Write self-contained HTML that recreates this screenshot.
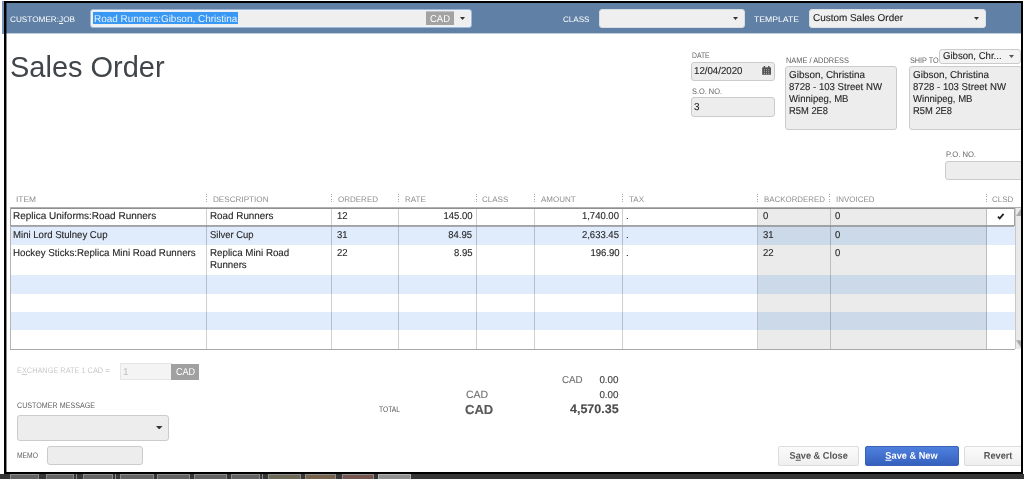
<!DOCTYPE html>
<html>
<head>
<meta charset="utf-8">
<title>Sales Order</title>
<style>
*{box-sizing:border-box;margin:0;padding:0}
html,body{width:1024px;height:479px;overflow:hidden;background:#fff}
body{font-family:"Liberation Sans",sans-serif;font-size:10px;color:#1a1a1a;position:relative;will-change:transform}
.abs{position:absolute}
#win{position:absolute;left:4px;top:1px;width:1019.5px;height:473px;border:2.5px solid #000;border-top-width:2px;background:#fff}
#taskbar{position:absolute;left:0;top:474px;width:1024px;height:5px;background:#363636}
#hdr{position:absolute;left:6px;top:3px;width:1015px;height:30px;background:#6080a6}
.lbl,.hl,.th{position:absolute;white-space:nowrap;transform-origin:0 0}
.fld{position:absolute;border:1px solid #c9c9c9}
.txt{position:absolute;white-space:nowrap;font-size:10px;line-height:12px;transform-origin:0 0;-webkit-text-stroke:0.12px}
.dots{position:absolute;width:1px;height:8.5px;background:repeating-linear-gradient(to bottom,#a8a8a8 0,#a8a8a8 1.1px,transparent 1.1px,transparent 2.4px)}
.btn{position:absolute;top:446px;height:19.5px;border:1px solid #dcdcdc;border-radius:2px;background:linear-gradient(#fbfbfb,#efefef);font-size:9.7px;font-weight:bold;color:#555;text-align:center;line-height:18px;white-space:nowrap}
.btn span{display:inline-block;transform:translateY(-0.35px) rotate(0.03deg) scaleX(0.95)}
.btn u{text-underline-offset:1.2px;text-decoration-thickness:1px}
.btn.blue{background:linear-gradient(#4f80de,#3560bd);border-color:#3a62b4;color:#fff}
</style>
</head>
<body>
<div id="win"></div>
<div id="hdr"></div>
<div class="abs" style="left:6px;top:33px;width:1015px;height:1px;background:rgba(96,128,166,0.4);"></div>
<div class="abs" style="left:2px;top:1px;width:2px;height:32.5px;background:#7f97b7;"></div>
<div class="hl" style="left:10px;top:16.0px;font-size:8px;line-height:8px;color:#fff;transform:rotate(0.03deg) scaleX(1.0249);">CUSTOMER:<u>J</u>OB</div>
<div class="fld" style="left:90px;top:9px;width:382px;height:19px;background:#efefef;border-color:#9fb8d8;border-radius:3px;box-shadow:inset 0 0 0 1px #eef4fb;"></div>
<div class="abs" style="left:93px;top:12px;width:145px;height:12px;background:#3a98f5;"></div>
<div class="txt" style="top:12.6px;font-size:10px;color:#e8f3ff;left:94.3px;transform:rotate(0.03deg) scaleX(0.9947);-webkit-text-stroke:0;">Road Runners:Gibson, Christina</div>
<div class="abs" style="left:426px;top:11px;width:28px;height:14px;background:#a3a3a3;"></div>
<div class="abs" style="left:426px;top:11px;width:28px;height:1px;background:rgba(239,239,239,0.4);"></div>
<div class="txt" style="top:12.5px;font-size:10px;color:#fff;left:430.4px;transform:rotate(0.03deg) scaleX(0.9467);-webkit-text-stroke:0;">CAD</div>
<svg class="abs" style="left:460.0px;top:16.5px" width="5" height="3" viewBox="0 0 5 3"><path d="M0 0 H5 L2.5 3 Z" fill="#333"/></svg>
<div class="hl" style="left:563px;top:16.0px;font-size:8px;line-height:8px;color:#fff;transform:rotate(0.03deg) scaleX(1.0101);">CLASS</div>
<div class="fld" style="left:599px;top:9px;width:146px;height:19px;background:#efefef;border-color:#d8dde4;border-radius:3px;"></div>
<svg class="abs" style="left:732.5px;top:16.5px" width="5" height="3" viewBox="0 0 5 3"><path d="M0 0 H5 L2.5 3 Z" fill="#333"/></svg>
<div class="hl" style="left:754px;top:16.0px;font-size:8px;line-height:8px;color:#fff;transform:rotate(0.03deg) scaleX(1.0807);">TEMPLATE</div>
<div class="fld" style="left:809px;top:9px;width:177px;height:19px;background:#efefef;border-color:#dde2e9;border-radius:3px;"></div>
<div class="txt" style="top:12.35px;font-size:10px;color:#262626;left:813.3px;transform:rotate(0.03deg) scaleX(0.9934);">Custom Sales Order</div>
<svg class="abs" style="left:974.0px;top:16.5px" width="5" height="3" viewBox="0 0 5 3"><path d="M0 0 H5 L2.5 3 Z" fill="#333"/></svg>
<div class="abs" style="left:10.3px;top:49.6px;font-size:30px;line-height:34px;color:#40454a;white-space:nowrap;transform-origin:0 0;transform:scaleX(0.966)">Sales Order</div>
<div class="lbl" style="left:692px;top:52.0px;font-size:8px;line-height:8px;color:#626262;transform:rotate(0.03deg) scaleX(0.8482);">DATE</div>
<div class="fld" style="left:691px;top:62px;width:84px;height:19px;background:#ededed;border-color:#cbcbcb;border-radius:3px;"></div>
<div class="txt" style="top:64.8px;font-size:10px;color:#262626;left:694.1px;transform:rotate(0.03deg) scaleX(0.9688);">12/04/2020</div>
<svg class="abs" style="left:761.6px;top:66px" width="9.2" height="9" viewBox="0 0 9.2 9"><rect x="0.2" y="1.4" width="8.8" height="7.4" fill="#525252"/><rect x="1.5" y="0.1" width="1.9" height="2" rx="0.8" fill="#525252"/><rect x="5.8" y="0.1" width="1.9" height="2" rx="0.8" fill="#525252"/><g stroke="#c2c2c2" stroke-width="0.75" stroke-dasharray="1.2 0.75"><path d="M2.45 3.1 V8.3 M4.6 3.1 V8.3 M6.75 3.1 V8.3"/></g></svg>
<div class="lbl" style="left:692px;top:88.0px;font-size:8px;line-height:8px;color:#626262;transform:rotate(0.03deg) scaleX(0.9244);">S.O. NO.</div>
<div class="fld" style="left:691px;top:97px;width:84px;height:20px;background:#ededed;border-color:#cbcbcb;border-radius:3px;"></div>
<div class="txt" style="top:101.0px;font-size:10px;color:#262626;left:693.9px;transform:rotate(0.03deg) scaleX(1.0000);">3</div>
<div class="lbl" style="left:786px;top:56.5px;font-size:8px;line-height:8px;color:#626262;transform:rotate(0.03deg) scaleX(0.9263);">NAME / ADDRESS</div>
<div class="fld" style="left:785px;top:66px;width:112px;height:64px;background:#ededed;border-color:#cbcbcb;border-radius:3px;"></div>
<div class="txt" style="top:69.4px;font-size:10px;color:#262626;left:788.6px;transform:rotate(0.03deg) scaleX(0.9915);">Gibson, Christina</div>
<div class="txt" style="top:81.0px;font-size:10px;color:#262626;left:788.6px;transform:rotate(0.03deg) scaleX(0.9611);">8728 - 103 Street NW</div>
<div class="txt" style="top:93.1px;font-size:10px;color:#262626;left:788.6px;transform:rotate(0.03deg) scaleX(0.9558);">Winnipeg, MB</div>
<div class="txt" style="top:105.2px;font-size:10px;color:#262626;left:788.6px;transform:rotate(0.03deg) scaleX(0.9370);">R5M 2E8</div>
<div class="lbl" style="left:910px;top:56.5px;font-size:8px;line-height:8px;color:#626262;transform:rotate(0.03deg) scaleX(0.9089);">SHIP TO</div>
<div class="fld" style="left:909px;top:66px;width:113px;height:64px;background:#ededed;border-color:#cbcbcb;border-radius:3px;"></div>
<div class="txt" style="top:69.4px;font-size:10px;color:#262626;left:912.6px;transform:rotate(0.03deg) scaleX(0.9915);">Gibson, Christina</div>
<div class="txt" style="top:81.0px;font-size:10px;color:#262626;left:912.6px;transform:rotate(0.03deg) scaleX(0.9611);">8728 - 103 Street NW</div>
<div class="txt" style="top:93.1px;font-size:10px;color:#262626;left:912.6px;transform:rotate(0.03deg) scaleX(0.9558);">Winnipeg, MB</div>
<div class="txt" style="top:105.2px;font-size:10px;color:#262626;left:912.6px;transform:rotate(0.03deg) scaleX(0.9370);">R5M 2E8</div>
<div class="fld" style="left:939px;top:49px;width:82px;height:15px;background:#f3f3f3;border-color:#cbcbcb;border-radius:3px;"></div>
<div class="txt" style="top:50px;font-size:10px;color:#262626;left:942.6px;transform:rotate(0.03deg) scaleX(0.9584);">Gibson, Chr...</div>
<svg class="abs" style="left:1008.5px;top:55.0px" width="5" height="3" viewBox="0 0 5 3"><path d="M0 0 H5 L2.5 3 Z" fill="#555"/></svg>
<div class="lbl" style="left:946px;top:150.7px;font-size:8px;line-height:8px;color:#626262;transform:rotate(0.03deg) scaleX(0.9547);">P.O. NO.</div>
<div class="fld" style="left:945px;top:161px;width:78px;height:18.5px;background:#ededed;border-color:#cbcbcb;border-radius:3px;"></div>
<div class="th" style="left:16px;top:195.7px;font-size:8px;line-height:8px;color:#8e8e8e;transform:rotate(0.03deg) scaleX(1.0466);">ITEM</div>
<div class="th" style="left:212.5px;top:195.7px;font-size:8px;line-height:8px;color:#8e8e8e;transform:rotate(0.03deg) scaleX(1.0151);">DESCRIPTION</div>
<div class="th" style="left:337.5px;top:195.7px;font-size:8px;line-height:8px;color:#8e8e8e;transform:rotate(0.03deg) scaleX(1.0000);">ORDERED</div>
<div class="th" style="left:404.5px;top:195.7px;font-size:8px;line-height:8px;color:#8e8e8e;transform:rotate(0.03deg) scaleX(1.0000);">RATE</div>
<div class="th" style="left:482px;top:195.7px;font-size:8px;line-height:8px;color:#8e8e8e;transform:rotate(0.03deg) scaleX(1.0000);">CLASS</div>
<div class="th" style="left:540.5px;top:195.7px;font-size:8px;line-height:8px;color:#8e8e8e;transform:rotate(0.03deg) scaleX(1.0000);">AMOUNT</div>
<div class="th" style="left:628.5px;top:195.7px;font-size:8px;line-height:8px;color:#8e8e8e;transform:rotate(0.03deg) scaleX(1.0000);">TAX</div>
<div class="th" style="left:763.5px;top:195.7px;font-size:8px;line-height:8px;color:#8e8e8e;transform:rotate(0.03deg) scaleX(0.9871);">BACKORDERED</div>
<div class="th" style="left:835.5px;top:195.7px;font-size:8px;line-height:8px;color:#8e8e8e;transform:rotate(0.03deg) scaleX(0.9956);">INVOICED</div>
<div class="th" style="left:992px;top:195.7px;font-size:8px;line-height:8px;color:#8e8e8e;transform:rotate(0.03deg) scaleX(0.9980);">CLSD</div>
<div class="dots" style="left:205.5px;top:194px"></div>
<div class="dots" style="left:330.5px;top:194px"></div>
<div class="dots" style="left:397.5px;top:194px"></div>
<div class="dots" style="left:475.5px;top:194px"></div>
<div class="dots" style="left:533.5px;top:194px"></div>
<div class="dots" style="left:622px;top:194px"></div>
<div class="dots" style="left:757px;top:194px"></div>
<div class="dots" style="left:829px;top:194px"></div>
<div class="dots" style="left:985.5px;top:194px"></div>
<div class="abs" style="left:10px;top:208px;width:1005px;height:18px;background:#ffffff;"></div>
<div class="abs" style="left:757.5px;top:208px;width:229px;height:18px;background:#ebebeb;"></div>
<div class="abs" style="left:10px;top:226px;width:1005px;height:18.5px;background:#e0ebfb;"></div>
<div class="abs" style="left:757.5px;top:226px;width:229px;height:18.5px;background:#ccd9e9;"></div>
<div class="abs" style="left:10px;top:244.5px;width:1005px;height:30.5px;background:#ffffff;"></div>
<div class="abs" style="left:757.5px;top:244.5px;width:229px;height:30.5px;background:#ebebeb;"></div>
<div class="abs" style="left:10px;top:275px;width:1005px;height:18.5px;background:#e0ebfb;"></div>
<div class="abs" style="left:757.5px;top:275px;width:229px;height:18.5px;background:#ccd9e9;"></div>
<div class="abs" style="left:10px;top:293.5px;width:1005px;height:18.5px;background:#ffffff;"></div>
<div class="abs" style="left:757.5px;top:293.5px;width:229px;height:18.5px;background:#ebebeb;"></div>
<div class="abs" style="left:10px;top:312px;width:1005px;height:18px;background:#e0ebfb;"></div>
<div class="abs" style="left:757.5px;top:312px;width:229px;height:18px;background:#ccd9e9;"></div>
<div class="abs" style="left:10px;top:330px;width:1005px;height:19px;background:#ffffff;"></div>
<div class="abs" style="left:757.5px;top:330px;width:229px;height:19px;background:#ebebeb;"></div>
<div class="abs" style="left:206.0px;top:208px;width:1px;height:141px;background:rgba(0,0,0,0.19);"></div>
<div class="abs" style="left:331.0px;top:208px;width:1px;height:141px;background:rgba(0,0,0,0.19);"></div>
<div class="abs" style="left:398.0px;top:208px;width:1px;height:141px;background:rgba(0,0,0,0.19);"></div>
<div class="abs" style="left:476.0px;top:208px;width:1px;height:141px;background:rgba(0,0,0,0.19);"></div>
<div class="abs" style="left:534.0px;top:208px;width:1px;height:141px;background:rgba(0,0,0,0.19);"></div>
<div class="abs" style="left:622.0px;top:208px;width:1px;height:141px;background:rgba(0,0,0,0.19);"></div>
<div class="abs" style="left:757.0px;top:208px;width:1px;height:141px;background:rgba(0,0,0,0.19);"></div>
<div class="abs" style="left:829.5px;top:208px;width:1px;height:141px;background:rgba(0,0,0,0.19);"></div>
<div class="abs" style="left:986.0px;top:208px;width:1px;height:141px;background:rgba(0,0,0,0.19);"></div>
<div class="abs" style="left:10px;top:207px;width:1011px;height:1px;background:#b0b0b0;"></div>
<div class="abs" style="left:10px;top:208px;width:1011px;height:1px;background:#8f8f8f;"></div>
<div class="abs" style="left:10px;top:348.5px;width:1005px;height:1px;background:#a8a8a8;"></div>
<div class="abs" style="left:10px;top:208px;width:1px;height:141px;background:#b5b5b5;"></div>
<div class="abs" style="left:1015px;top:208px;width:6px;height:141px;background:#e9e9e9;border-left:1px solid #c8c8c8"></div>
<svg class="abs" style="left:1015px;top:208px" width="6" height="9" viewBox="0 0 6 9"><path d="M6 0.8 L6 8 L1 8 Z" fill="#a9a9a9"/></svg>
<svg class="abs" style="left:1015px;top:339px" width="6" height="10" viewBox="0 0 6 10"><path d="M1 1.2 L6 1.2 L6 8.6 Z" fill="#a9a9a9"/></svg>
<div class="abs" style="left:10px;top:208px;width:1005px;height:18px;border:1px solid #a2a2a2;border-top:none"></div>
<div class="abs" style="left:11px;top:226px;width:1003px;height:1px;background:rgba(110,110,110,0.5);"></div>
<div class="txt" style="top:209.7px;font-size:10px;color:#262626;left:13px;transform:rotate(0.03deg) scaleX(0.9986);">Replica Uniforms:Road Runners</div>
<div class="txt" style="top:209.7px;font-size:10px;color:#262626;left:209.5px;transform:rotate(0.03deg) scaleX(0.9847);">Road Runners</div>
<div class="txt" style="top:209.7px;font-size:10px;color:#262626;left:337px;transform:rotate(0.03deg) scaleX(0.9500);">12</div>
<div class="txt" style="top:209.7px;font-size:10px;color:#262626;right:551.5px;transform-origin:100% 0;transform:rotate(0.03deg) scaleX(0.9500);">145.00</div>
<div class="txt" style="top:209.7px;font-size:10px;color:#262626;right:404.79999999999995px;transform-origin:100% 0;transform:rotate(0.03deg) scaleX(0.9500);">1,740.00</div>
<div class="txt" style="top:209.7px;font-size:10px;color:#262626;left:625.5px;transform:rotate(0.03deg) scaleX(1.0000);">.</div>
<div class="txt" style="top:209.7px;font-size:10px;color:#262626;left:763px;transform:rotate(0.03deg) scaleX(0.9500);">0</div>
<div class="txt" style="top:209.7px;font-size:10px;color:#262626;left:835px;transform:rotate(0.03deg) scaleX(0.9500);">0</div>
<div class="txt" style="top:228.55px;font-size:10px;color:#262626;left:13px;transform:rotate(0.03deg) scaleX(0.9605);">Mini Lord Stulney Cup</div>
<div class="txt" style="top:228.55px;font-size:10px;color:#262626;left:209.5px;transform:rotate(0.03deg) scaleX(0.9428);">Silver Cup</div>
<div class="txt" style="top:228.55px;font-size:10px;color:#262626;left:337px;transform:rotate(0.03deg) scaleX(0.9500);">31</div>
<div class="txt" style="top:228.55px;font-size:10px;color:#262626;right:551.5px;transform-origin:100% 0;transform:rotate(0.03deg) scaleX(0.9500);">84.95</div>
<div class="txt" style="top:228.55px;font-size:10px;color:#262626;right:404.79999999999995px;transform-origin:100% 0;transform:rotate(0.03deg) scaleX(0.9500);">2,633.45</div>
<div class="txt" style="top:228.55px;font-size:10px;color:#262626;left:625.5px;transform:rotate(0.03deg) scaleX(1.0000);">.</div>
<div class="txt" style="top:228.55px;font-size:10px;color:#262626;left:763px;transform:rotate(0.03deg) scaleX(0.9500);">31</div>
<div class="txt" style="top:228.55px;font-size:10px;color:#262626;left:835px;transform:rotate(0.03deg) scaleX(0.9500);">0</div>
<div class="txt" style="top:246.7px;font-size:10px;color:#262626;left:13px;transform:rotate(0.03deg) scaleX(0.9757);">Hockey Sticks:Replica Mini Road Runners</div>
<div class="txt" style="top:246.7px;font-size:10px;color:#262626;left:209.5px;transform:rotate(0.03deg) scaleX(0.9765);">Replica Mini Road</div>
<div class="txt" style="top:246.7px;font-size:10px;color:#262626;left:337px;transform:rotate(0.03deg) scaleX(0.9500);">22</div>
<div class="txt" style="top:246.7px;font-size:10px;color:#262626;right:551.5px;transform-origin:100% 0;transform:rotate(0.03deg) scaleX(0.9500);">8.95</div>
<div class="txt" style="top:246.7px;font-size:10px;color:#262626;right:404.79999999999995px;transform-origin:100% 0;transform:rotate(0.03deg) scaleX(0.9500);">196.90</div>
<div class="txt" style="top:246.7px;font-size:10px;color:#262626;left:625.5px;transform:rotate(0.03deg) scaleX(1.0000);">.</div>
<div class="txt" style="top:246.7px;font-size:10px;color:#262626;left:763px;transform:rotate(0.03deg) scaleX(0.9500);">22</div>
<div class="txt" style="top:246.7px;font-size:10px;color:#262626;left:835px;transform:rotate(0.03deg) scaleX(0.9500);">0</div>
<div class="txt" style="top:258.7px;font-size:10px;color:#262626;left:209.5px;transform:rotate(0.03deg) scaleX(0.9719);">Runners</div>
<svg class="abs" style="left:997px;top:212.8px" width="8" height="7" viewBox="0 0 8 7"><path d="M0.9 3.6 L2.7 5.4 L6.6 0.9" fill="none" stroke="#222" stroke-width="1.7"/></svg>
<div class="lbl" style="left:17px;top:367.0px;font-size:8px;line-height:8px;color:#c9c9c9;transform:rotate(0.03deg) scaleX(0.9198);">E<u>X</u>CHANGE RATE 1 CAD =</div>
<div class="abs" style="left:119.5px;top:363px;width:52px;height:17px;background:#f4f4f4;border:1px solid #e6e6e6"></div>
<div class="txt" style="top:366px;font-size:10px;color:#c4c4c4;left:123px;transform:rotate(0.03deg) scaleX(1.0000);">1</div>
<div class="abs" style="left:171px;top:364px;width:28px;height:16px;background:#a0a0a0;"></div>
<div class="txt" style="top:366.2px;font-size:10px;color:#fff;left:175.8px;transform:rotate(0.03deg) scaleX(0.9089);-webkit-text-stroke:0;">CAD</div>
<div class="lbl" style="left:17px;top:401.5px;font-size:8px;line-height:8px;color:#626262;transform:rotate(0.03deg) scaleX(0.8922);">CUSTOMER MESSAGE</div>
<div class="fld" style="left:17px;top:415px;width:151.5px;height:25.5px;background:#ededed;border-color:#cbcbcb;border-radius:3px;"></div>
<svg class="abs" style="left:156.25px;top:425.95px" width="6.5" height="3.5" viewBox="0 0 6.5 3.5"><path d="M0 0 H6.5 L3.25 3.5 Z" fill="#333"/></svg>
<div class="lbl" style="left:17px;top:452.0px;font-size:8px;line-height:8px;color:#626262;transform:rotate(0.03deg) scaleX(0.8437);">MEMO</div>
<div class="fld" style="left:47px;top:446px;width:96px;height:19px;background:#ededed;border-color:#cbcbcb;border-radius:3px;"></div>
<div class="lbl" style="left:378.5px;top:406.0px;font-size:8px;line-height:8px;color:#555;transform:rotate(0.03deg) scaleX(0.8384);">TOTAL</div>
<div class="txt" style="top:387.8px;font-size:10.5px;color:#727272;left:465.5px;transform:rotate(0.03deg) scaleX(1.0000);">CAD</div>
<div class="txt" style="top:401.8px;font-size:13px;color:#585858;font-weight:bold;left:465.4px;transform:rotate(0.03deg) scaleX(1.0000);line-height:15px;">CAD</div>
<div class="txt" style="top:373.5px;font-size:10px;color:#707070;left:561.7px;transform:rotate(0.03deg) scaleX(0.9751);">CAD</div>
<div class="txt" style="top:373.95px;font-size:10px;color:#404040;right:405.4px;transform-origin:100% 0;transform:rotate(0.03deg) scaleX(0.9800);">0.00</div>
<div class="txt" style="top:389.2px;font-size:10px;color:#404040;right:405.4px;transform-origin:100% 0;transform:rotate(0.03deg) scaleX(0.9800);">0.00</div>
<div class="txt" style="top:402px;font-size:12.5px;color:#4a4a4a;font-weight:bold;right:405px;transform-origin:100% 0;transform:rotate(0.03deg) scaleX(1.0000);line-height:15px;">4,570.35</div>
<div class="btn" style="left:778px;width:80.5px"><span>S<u>a</u>ve &amp; Close</span></div>
<div class="btn blue" style="left:865px;width:93.5px"><span><u>S</u>ave &amp; New</span></div>
<div class="btn" style="left:964px;width:69px"><span>Revert</span></div>
<div id="taskbar"></div>
<div class="abs" style="left:10px;top:474px;width:29px;height:5px;background:#636363;border:1px solid #8c8c8c;border-bottom:none"></div>
<div class="abs" style="left:45.5px;top:474px;width:28.0px;height:5px;background:#636363;border:1px solid #8c8c8c;border-bottom:none"></div>
<div class="abs" style="left:83px;top:474px;width:29.5px;height:5px;background:#636363;border:1px solid #8c8c8c;border-bottom:none"></div>
<div class="abs" style="left:119.5px;top:474px;width:34.5px;height:5px;background:#636363;border:1px solid #8c8c8c;border-bottom:none"></div>
<div class="abs" style="left:157px;top:474px;width:32.5px;height:5px;background:#636363;border:1px solid #8c8c8c;border-bottom:none"></div>
<div class="abs" style="left:194px;top:474px;width:32.5px;height:5px;background:#636363;border:1px solid #8c8c8c;border-bottom:none"></div>
<div class="abs" style="left:231px;top:474px;width:28.5px;height:5px;background:#636363;border:1px solid #8c8c8c;border-bottom:none"></div>
<div class="abs" style="left:267.5px;top:474px;width:33.0px;height:5px;background:#6c6958;border:1px solid #8c8c8c;border-bottom:none"></div>
<div class="abs" style="left:304.5px;top:474px;width:31.5px;height:5px;background:#77624c;border:1px solid #8c8c8c;border-bottom:none"></div>
<div class="abs" style="left:341.5px;top:474px;width:32.5px;height:5px;background:#77554f;border:1px solid #8c8c8c;border-bottom:none"></div>
<div class="abs" style="left:377.5px;top:474px;width:33.0px;height:5px;background:#909090;border:1px solid #b4b4b4;border-bottom:none"></div>
<div class="abs" style="left:76px;top:474px;width:1px;height:5px;background:#8a8a8a;"></div>
<div class="abs" style="left:114.5px;top:474px;width:1px;height:5px;background:#8a8a8a;"></div>
<div class="abs" style="left:262px;top:474px;width:1px;height:5px;background:#8a8a8a;"></div>
<div class="abs" style="left:1021px;top:1px;width:2px;height:473px;background:#000;"></div>
<div class="abs" style="left:6px;top:3px;width:1px;height:469px;background:rgba(0,0,0,0.45);"></div>
<div class="abs" style="left:1023px;top:0px;width:1px;height:474px;background:#fff;"></div>
</body>
</html>
